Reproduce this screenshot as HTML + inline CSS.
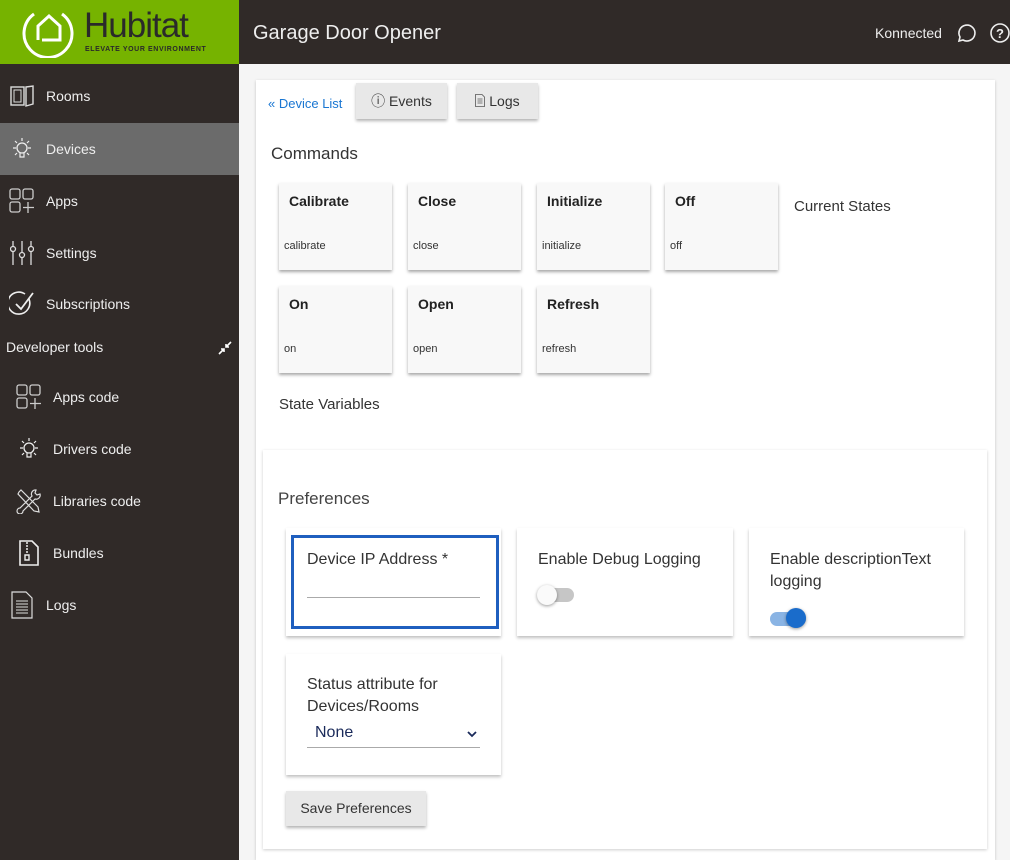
<!DOCTYPE html>
<html><head><meta charset="utf-8"><style>
*{box-sizing:border-box;margin:0;padding:0}
html{overflow:hidden;width:1010px;height:860px}
body{width:1010px;height:860px;overflow:hidden;background:#f5f5f5;font-family:"Liberation Sans",sans-serif;color:#333;position:relative}
.a{position:absolute}
#side{left:0;top:0;width:239px;height:860px;background:#302a28}
#logo{left:0;top:0;width:239px;height:64px;background:#76b300}
#hdr{left:239px;top:0;width:771px;height:64px;background:#302a28}
.nav{position:absolute;left:0;width:239px;height:52px;color:#eee;font-size:14px}
.nav span{position:absolute;top:50%;transform:translateY(-50%)}
.nav svg{position:absolute;top:50%;transform:translateY(-50%)}
.card{position:absolute;background:#fff;box-shadow:0 1px 3px rgba(0,0,0,.2)}
.cmd{position:absolute;width:113px;height:87px;background:#f8f8f8;box-shadow:0 2px 3px rgba(0,0,0,.35)}
.cmd b{position:absolute;left:10px;top:10px;font-size:14px;color:#222}
.cmd i{position:absolute;left:5px;top:57px;font-style:normal;font-size:11px;color:#333}
.btn{position:absolute;height:36px;background:#e8e8e8;box-shadow:0 2px 3px rgba(0,0,0,.3);font-size:14px;color:#333;text-align:center;line-height:36px}
.pc{position:absolute;background:#fff;box-shadow:0 2px 3px rgba(0,0,0,.25)}
.lbl{position:absolute;font-size:16px;color:#333;line-height:22px}
</style></head><body>
<div id="side" class="a"></div>
<div id="logo" class="a">
<svg class="a" style="left:20px;top:6px" width="56" height="52" viewBox="0 0 56 52"><path d="M14 8 A24 24 0 1 0 42 8" fill="none" stroke="#fff" stroke-width="3"/><path d="M18 34 V20 L29 10 L40 20 V34 H22" fill="none" stroke="#fff" stroke-width="3"/></svg>
<div class="a" style="left:84px;top:6px;font-size:35px;color:#2a2a2a;letter-spacing:-1px">Hubitat</div>
<div class="a" style="left:85px;top:46px;font-size:7px;color:#2a2a2a;font-weight:bold;letter-spacing:.6px">ELEVATE YOUR ENVIRONMENT</div>
</div>
<div id="hdr" class="a">
<div class="a" style="left:14px;top:22px;font-size:20px;color:#eee">Garage Door Opener</div>
<div class="a" style="left:636px;top:25px;font-size:14px;color:#eee">Konnected</div>
<svg class="a" style="left:716px;top:22px" width="22" height="22" viewBox="0 0 22 22"><path d="M4 19 L5 15 A8 8 0 1 1 8 18 Z" fill="none" stroke="#eee" stroke-width="1.6"/></svg>
<svg class="a" style="left:750px;top:22px" width="22" height="22" viewBox="0 0 22 22"><circle cx="11" cy="11" r="9" fill="none" stroke="#eee" stroke-width="1.6"/><text x="11" y="16" text-anchor="middle" font-size="13" fill="#eee" font-family="Liberation Sans" font-weight="bold">?</text></svg>
</div>

<div class="nav" style="top:70px"><svg style="left:10px" width="24" height="22" viewBox="0 0 24 22"><rect x="1" y="2" width="13" height="18" fill="none" stroke="#ddd" stroke-width="1.4"/><rect x="4" y="5" width="7" height="12" fill="none" stroke="#ddd"/><path d="M16 2 L23 1 V19 L16 21 Z" fill="none" stroke="#ddd" stroke-width="1.4"/></svg><span style="left:46px">Rooms</span></div>
<div class="nav" style="top:123px;background:#6b6b6b"><svg style="left:10px" width="24" height="24" viewBox="0 0 24 24"><circle cx="12" cy="11" r="5" fill="none" stroke="#eee" stroke-width="1.3"/><path d="M10 16 V20 H14 V16 M12 1 V4 M3 11 H6 M18 11 H21 M5 4 L7 6 M19 4 L17 6 M5 18 L7 16 M19 18 L17 16" stroke="#eee" stroke-width="1.2" fill="none"/></svg><span style="left:46px">Devices</span></div>
<div class="nav" style="top:175px"><svg style="left:9px" width="26" height="26" viewBox="0 0 26 26"><rect x="1" y="1" width="10" height="10" rx="2" fill="none" stroke="#ccc" stroke-width="1.3"/><rect x="14" y="1" width="10" height="10" rx="2" fill="none" stroke="#ccc" stroke-width="1.3"/><rect x="1" y="14" width="10" height="10" rx="2" fill="none" stroke="#ccc" stroke-width="1.3"/><path d="M19 14 V25 M14 19.5 H25" stroke="#ccc" stroke-width="1.3"/></svg><span style="left:46px">Apps</span></div>
<div class="nav" style="top:227px"><svg style="left:10px" width="24" height="26" viewBox="0 0 24 26"><path d="M3 1 V25 M12 1 V25 M21 1 V25" stroke="#ddd" stroke-width="1.3"/><circle cx="3" cy="9" r="2.5" fill="#302a28" stroke="#ddd" stroke-width="1.3"/><circle cx="12" cy="15" r="2.5" fill="#302a28" stroke="#ddd" stroke-width="1.3"/><circle cx="21" cy="9" r="2.5" fill="#302a28" stroke="#ddd" stroke-width="1.3"/></svg><span style="left:46px">Settings</span></div>
<div class="nav" style="top:278px"><svg style="left:9px" width="26" height="26" viewBox="0 0 26 26"><path d="M20 8 A11 11 0 1 1 16 3" fill="none" stroke="#eee" stroke-width="1.6"/><path d="M7 13 L12 18 L24 2" fill="none" stroke="#eee" stroke-width="1.8"/></svg><span style="left:46px">Subscriptions</span></div>
<div class="a" style="left:6px;top:339px;font-size:14px;color:#eee">Developer tools</div>
<svg class="a" style="left:218px;top:341px" width="14" height="14" viewBox="0 0 14 14"><path d="M1 13 L6 8 M3 8 H6 V11 M13 1 L8 6 M8 3 V6 H11" stroke="#fff" stroke-width="1.6" fill="none"/></svg>
<div class="nav" style="top:371px"><svg style="left:16px" width="26" height="26" viewBox="0 0 26 26"><rect x="1" y="1" width="10" height="10" rx="2" fill="none" stroke="#ccc" stroke-width="1.3"/><rect x="14" y="1" width="10" height="10" rx="2" fill="none" stroke="#ccc" stroke-width="1.3"/><rect x="1" y="14" width="10" height="10" rx="2" fill="none" stroke="#ccc" stroke-width="1.3"/><path d="M19 14 V25 M14 19.5 H25" stroke="#ccc" stroke-width="1.3"/></svg><span style="left:53px">Apps code</span></div>
<div class="nav" style="top:423px"><svg style="left:17px" width="24" height="24" viewBox="0 0 24 24"><circle cx="12" cy="11" r="5" fill="none" stroke="#eee" stroke-width="1.3"/><path d="M10 16 V20 H14 V16 M12 1 V4 M3 11 H6 M18 11 H21 M5 4 L7 6 M19 4 L17 6 M5 18 L7 16 M19 18 L17 16" stroke="#eee" stroke-width="1.2" fill="none"/></svg><span style="left:53px">Drivers code</span></div>
<div class="nav" style="top:475px"><svg style="left:16px" width="26" height="26" viewBox="0 0 26 26"><path d="M3 4 L5 2 L22 19 L23 24 L18 23 L2 6 Z M20 2 A4 4 0 0 0 16 8 L4 20 A3 3 0 1 0 7 23 L19 11 A4 4 0 0 0 24 6 L21 7 L19 5 Z" fill="none" stroke="#ddd" stroke-width="1.2"/></svg><span style="left:53px">Libraries code</span></div>
<div class="nav" style="top:527px"><svg style="left:18px" width="22" height="26" viewBox="0 0 22 26"><path d="M2 1 H14 L20 7 V25 H2 Z" fill="none" stroke="#eee" stroke-width="1.6"/><path d="M8 3 H10 M8 6 H10 M8 9 H10 M8 12 H10 M7 15 H11 V20 H7 Z" stroke="#eee" stroke-width="1.4" fill="none"/></svg><span style="left:53px">Bundles</span></div>
<div class="nav" style="top:579px"><svg style="left:11px" width="22" height="28" viewBox="0 0 22 28"><path d="M1 1 H15 L21 7 V27 H1 Z" fill="none" stroke="#ddd" stroke-width="1.2"/><path d="M5 10 H17 M5 13 H17 M5 16 H17 M5 19 H17 M5 22 H17" stroke="#ddd" stroke-width="1.1"/></svg><span style="left:46px">Logs</span></div>

<div class="card" style="left:256px;top:80px;width:739px;height:780px"></div>
<div class="a" style="left:268px;top:96px;font-size:13px;color:#1976d2">« Device List</div>
<div class="btn" style="left:356px;top:83px;width:91px">ⓘ Events</div>
<div class="btn" style="left:457px;top:83px;width:81px"><svg width="10" height="13" viewBox="0 0 10 13" style="vertical-align:-1px"><path d="M.5 .5 H7 L9.5 3 V12.5 H.5 Z M2.5 5 H7.5 M2.5 7 H7.5 M2.5 9 H7.5" fill="none" stroke="#555" stroke-width=".8"/></svg> Logs</div>
<div class="a" style="left:271px;top:144px;font-size:17px;color:#333">Commands</div>
<div class="cmd" style="left:279px;top:183px"><b>Calibrate</b><i>calibrate</i></div>
<div class="cmd" style="left:408px;top:183px"><b>Close</b><i>close</i></div>
<div class="cmd" style="left:537px;top:183px"><b>Initialize</b><i>initialize</i></div>
<div class="cmd" style="left:665px;top:183px"><b>Off</b><i>off</i></div>
<div class="cmd" style="left:279px;top:286px"><b>On</b><i>on</i></div>
<div class="cmd" style="left:408px;top:286px"><b>Open</b><i>open</i></div>
<div class="cmd" style="left:537px;top:286px"><b>Refresh</b><i>refresh</i></div>
<div class="a" style="left:794px;top:198px;font-size:15px;color:#333">Current States</div>
<div class="a" style="left:279px;top:396px;font-size:15px;color:#333">State Variables</div>

<div class="card" style="left:263px;top:450px;width:724px;height:399px"></div>
<div class="a" style="left:278px;top:489px;font-size:17px;color:#444">Preferences</div>
<div class="pc" style="left:286px;top:528px;width:215px;height:108px"></div>
<div class="a" style="left:291px;top:535px;width:208px;height:94px;border:3px solid #1f5fbf"></div>
<div class="lbl" style="left:307px;top:549px">Device IP Address *</div>
<div class="a" style="left:307px;top:597px;width:173px;height:1px;background:#aaa"></div>
<div class="pc" style="left:517px;top:528px;width:216px;height:108px"></div>
<div class="lbl" style="left:538px;top:549px">Enable Debug Logging</div>
<div class="a" style="left:538px;top:588px;width:36px;height:14px;border-radius:7px;background:#c6c6c6"></div>
<div class="a" style="left:537px;top:585px;width:20px;height:20px;border-radius:50%;background:#fafafa;box-shadow:0 1px 3px rgba(0,0,0,.4)"></div>
<div class="pc" style="left:749px;top:528px;width:215px;height:108px"></div>
<div class="lbl" style="left:770px;top:549px">Enable descriptionText<br>logging</div>
<div class="a" style="left:770px;top:612px;width:36px;height:14px;border-radius:7px;background:#8ab4e4"></div>
<div class="a" style="left:786px;top:608px;width:20px;height:20px;border-radius:50%;background:#1a6ccb;box-shadow:0 1px 3px rgba(0,0,0,.4)"></div>
<div class="pc" style="left:286px;top:654px;width:215px;height:121px"></div>
<div class="lbl" style="left:307px;top:674px">Status attribute for<br>Devices/Rooms</div>
<div class="a" style="left:315px;top:724px;font-size:16px;color:#1a2a5a">None</div>
<svg class="a" style="left:467px;top:730px" width="10" height="8" viewBox="0 0 10 8"><path d="M1 2 L5 6 L9 2" stroke="#1a2a5a" stroke-width="1.8" fill="none"/></svg>
<div class="a" style="left:307px;top:747px;width:173px;height:1px;background:#aaa"></div>
<div class="btn" style="left:286px;top:791px;width:140px;height:35px;line-height:35px">Save Preferences</div>
</body></html>
